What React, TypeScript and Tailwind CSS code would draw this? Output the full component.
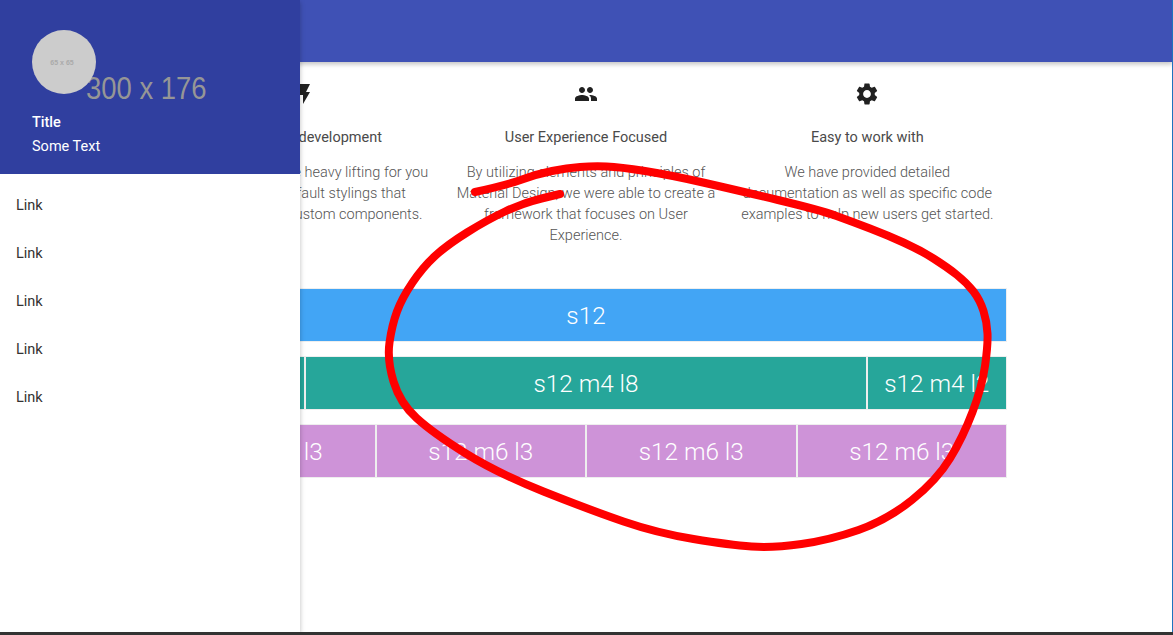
import React from "react";

const font = "font-['Roboto',sans-serif]";

// the hand-drawn red loop, passed through as a smoothed path
const loop: [number, number][] = [
  [475, 192], [507, 185], [537, 174], [567, 168], [593, 166], [620, 167], [670, 175], [736, 190], [820, 210],
  [853, 222], [887, 235], [920, 250], [947, 267], [967, 283], [980, 300], [987, 322], [988, 345], [982, 387],
  [963, 437], [937, 480], [887, 520], [830, 540], [773, 548], [730, 545], [657, 533], [590, 510], [497, 473],
  [433, 433], [400, 403], [387, 360], [392, 325], [402, 298], [423, 267], [447, 245], [487, 220], [523, 203],
  [560, 194],
];

const smooth = (pts: [number, number][]) => {
  let d = `M${pts[0][0]} ${pts[0][1]}`;
  for (let i = 1; i < pts.length - 1; i++) {
    const mx = (pts[i][0] + pts[i + 1][0]) / 2;
    const my = (pts[i][1] + pts[i + 1][1]) / 2;
    d += ` Q${pts[i][0]} ${pts[i][1]} ${mx} ${my}`;
  }
  const last = pts[pts.length - 1];
  return d + ` L${last[0]} ${last[1]}`;
};

const Feature = ({ icon, title, text }: { icon: React.ReactNode; title: string; text: string }) => (
  <div className="w-1/3 px-[10px] text-center">
    <div className="flex h-6 justify-center text-[#212121]">{icon}</div>
    <h5 className="mt-5 text-[14.5px] leading-[24px] font-normal text-[#4a4a4a]">{title}</h5>
    <p className="mt-3 text-[14.5px] leading-[21px] font-light text-[#555]">{text}</p>
  </div>
);

const Cell = ({ className, bg, label }: { className: string; bg: string; label: string }) => (
  <div className={`${className} ${bg} h-[54px] border border-[#eee] text-center text-[24.3px] leading-[54px] font-light text-white`}>
    {label}
  </div>
);

export default function App() {
  return (
    <div className={`${font} relative h-[635px] w-[1173px] overflow-hidden bg-white`}>
      <nav className="h-[62px] bg-[#3f51b5] shadow-[0_2px_5px_rgba(0,0,0,0.26)]" />

      <div className="ml-[165px] w-[842px]">
        <div className="mt-5 -ml-px flex w-[844px]">
          <Feature
            title="Speeds up development"
            text="We did most of the heavy lifting for you to provide a default stylings that incorporate our custom components."
            icon={
              <svg viewBox="0 0 24 24" className="h-6 w-6 fill-current">
                <path d="M7 2v11h3v9l7-12h-4l4-8z" />
              </svg>
            }
          />
          <Feature
            title="User Experience Focused"
            text="By utilizing elements and principles of Material Design, we were able to create a framework that focuses on User Experience."
            icon={
              <svg viewBox="0 0 24 24" className="h-6 w-6 fill-current">
                <path d="M16 11c1.66 0 2.99-1.34 2.99-3S17.66 5 16 5s-3 1.34-3 3 1.34 3 3 3zm-8 0c1.66 0 2.99-1.34 2.99-3S9.66 5 8 5 5 6.34 5 8s1.34 3 3 3zm0 2c-2.33 0-7 1.17-7 3.5V19h14v-2.5c0-2.33-4.67-3.5-7-3.5zm8 0c-.29 0-.62.02-.97.05 1.16.84 1.97 1.97 1.97 3.45V19h6v-2.5c0-2.33-4.67-3.5-7-3.5z" />
              </svg>
            }
          />
          <Feature
            title="Easy to work with"
            text="We have provided detailed documentation as well as specific code examples to help new users get started."
            icon={
              <svg viewBox="0 0 24 24" className="-mt-px h-[26px] w-[26px] fill-current">
                <path d="M19.14 12.94c.04-.3.06-.61.06-.94 0-.32-.02-.64-.07-.94l2.03-1.58a.49.49 0 0 0 .12-.61l-1.92-3.32a.488.488 0 0 0-.59-.22l-2.39.96c-.5-.38-1.03-.7-1.62-.94l-.36-2.54a.484.484 0 0 0-.48-.41h-3.84c-.24 0-.43.17-.47.41l-.36 2.54c-.59.24-1.13.57-1.62.94l-2.39-.96c-.22-.08-.47 0-.59.22L2.74 8.87c-.12.21-.08.47.12.61l2.03 1.58c-.05.3-.09.63-.09.94s.02.64.07.94l-2.03 1.58a.49.49 0 0 0-.12.61l1.92 3.32c.12.22.37.29.59.22l2.39-.96c.5.38 1.03.7 1.62.94l.36 2.54c.05.24.24.41.48.41h3.84c.24 0 .44-.17.47-.41l.36-2.54c.59-.24 1.13-.56 1.62-.94l2.39.96c.22.08.47 0 .59-.22l1.92-3.32c.12-.22.07-.47-.12-.61l-2.01-1.58zM12 15.6c-1.98 0-3.6-1.62-3.6-3.6s1.62-3.6 3.6-3.6 3.6 1.62 3.6 3.6-1.62 3.6-3.6 3.6z" />
              </svg>
            }
          />
        </div>

        <div className="mt-[42px] flex flex-col gap-[14px]">
          <div className="flex">
            <Cell className="w-full" bg="bg-[#42a5f5]" label="s12" />
          </div>
          <div className="flex">
            <Cell className="w-1/6" bg="bg-[#26a69a]" label="s12 m4 l2" />
            <Cell className="w-2/3" bg="bg-[#26a69a]" label="s12 m4 l8" />
            <Cell className="w-1/6" bg="bg-[#26a69a]" label="s12 m4 l2" />
          </div>
          <div className="flex">
            <Cell className="w-1/4" bg="bg-[#ce93d8]" label="s12 m6 l3" />
            <Cell className="w-1/4" bg="bg-[#ce93d8]" label="s12 m6 l3" />
            <Cell className="w-1/4" bg="bg-[#ce93d8]" label="s12 m6 l3" />
            <Cell className="w-1/4" bg="bg-[#ce93d8]" label="s12 m6 l3" />
          </div>
        </div>
      </div>

      {/* side drawer over the page */}
      <aside className="absolute top-0 left-0 h-[632px] w-[300px] bg-white shadow-[0_2px_5px_rgba(0,0,0,0.26)]">
        <div className="relative h-[174px] bg-[#303f9f] px-8 pt-[30px]">
          <span className="absolute top-[69px] left-[86px] origin-left scale-x-[0.857] font-['Liberation_Sans',sans-serif] text-[32px] leading-[38px] text-[#969696]">
            300 x 176
          </span>
          <div className="relative flex h-16 w-16 items-center justify-center rounded-full bg-[#cccccc] pt-[3px] pr-[4px] font-['Liberation_Sans',sans-serif] text-[7px] font-bold text-[#aaa]">
            65 x 65
          </div>
          <p className="relative mt-[17px] text-[14.5px] leading-6 font-medium text-white">Title</p>
          <p className="relative text-[14.5px] leading-6 text-white">Some Text</p>
        </div>
        <ul className="pt-2">
          {[1, 2, 3, 4, 5].map((n) => (
            <li key={n} className="h-12 px-4 text-[14.5px] leading-12 font-normal text-[#333]">
              Link
            </li>
          ))}
        </ul>
      </aside>

      {/* window edges of the captured screen */}
      <div className="absolute right-0 top-0 h-full w-px bg-[#1e73be]" />
      <div className="absolute bottom-0 left-0 h-[3px] w-full bg-[#333]" />

      <svg className="pointer-events-none absolute inset-0 h-[635px] w-[1173px]" viewBox="0 0 1173 635" fill="none">
        <path d={smooth(loop)} stroke="#ff0000" strokeWidth="8" strokeLinecap="round" strokeLinejoin="round" />
      </svg>
    </div>
  );
}
